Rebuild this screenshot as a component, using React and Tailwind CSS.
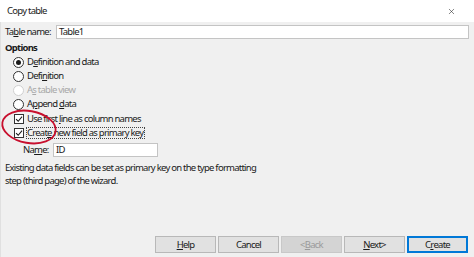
import React from 'react';
import { X } from 'lucide-react';

const Radio = ({ checked, disabled, children }) => (
    <div className={`flex items-center h-[14px] ${disabled ? 'text-[#a8a8a8]' : 'text-[#1a1a1a]'}`}>
        <span className={`w-[11px] h-[11px] rounded-full border bg-white flex items-center justify-center ml-[8px] mr-[3px] ${disabled ? 'border-[#d0d0d0]' : 'border-[#333]'}`}>
            {checked && <span className="w-[5px] h-[5px] rounded-full bg-[#1a1a1a]" />}
        </span>
        <span>{children}</span>
    </div>
);

const Check = ({ focused, children }) => (
    <div className="flex items-center h-[14px] text-[#1a1a1a]">
        <span className="w-[10px] h-[10px] border border-[#333] bg-white flex items-center justify-center ml-[9px] mr-[3px]">
            <svg width="8" height="8" viewBox="0 0 10 10">
                <path d="M1.3 5.2 L4 7.8 L8.8 2" fill="none" stroke="#1a1a1a" strokeWidth="1.3" />
            </svg>
        </span>
        <span className={focused ? 'border border-dotted border-[#444] leading-[10px] -ml-[1px] pr-[1px]' : ''}>{children}</span>
    </div>
);

const Btn = ({ children, disabled, primary }) => (
    <button
        className={`w-[61px] h-[17px] flex items-center justify-center ${primary ? 'border-[2px] border-[#0078d7] bg-[#e1e1e1] text-[#1a1a1a]' : disabled ? 'border border-[#c8c8c8] bg-[#d4d4d4] text-[#9a9a9a]' : 'border border-[#b8b8b8] bg-[#e1e1e1] text-[#1a1a1a]'}`}
    >
        {children}
    </button>
);

export default function App() {
    return (
        <div className="w-[474px] h-[257px] bg-white relative overflow-hidden text-[9.5px] tracking-[-0.75px] font-['Noto_Sans',sans-serif] text-[#1a1a1a]">
            <div className="h-[22px] flex items-center justify-between pl-[7px] pr-[18px] bg-white">
                <span>Copy table</span>
                <X size={9} strokeWidth={1.4} />
            </div>
            <div className="h-[235px] bg-[#f0f0f0] border-l border-[#e0e0e0] flex flex-col pl-[4px] pr-[5px] leading-[14px]">
                <div className="flex items-center h-[14px] mt-[3px]">
                    <span className="w-[51px] shrink-0">Ta<span className="underline">b</span>le name:</span>
                    <div className="flex-1 h-[14px] bg-white border border-[#c4c4c4] flex items-center pl-[2px]">Table1</div>
                </div>
                <div className="font-bold mt-[2px] h-[14px]">Options</div>
                <Radio checked>D<span className="underline">e</span>finition and data</Radio>
                <Radio>Defi<span className="underline">n</span>ition</Radio>
                <Radio disabled>A<span className="underline">s</span> table view</Radio>
                <Radio>A<span className="underline">p</span>pend <span className="underline">d</span>ata</Radio>
                <div className="mt-[1px]">
                    <Check>Use first <span className="underline">l</span>ine as column names</Check>
                    <Check focused>Creat<span className="underline">e</span> new field as primary key</Check>
                </div>
                <div className="flex items-center h-[14px] mt-[3px] ml-[18px]">
                    <span className="w-[30px]">Na<span className="underline">m</span>e:</span>
                    <div className="w-[105px] h-[14px] bg-white border border-[#c4c4c4] flex items-center pl-[2px]">ID</div>
                </div>
                <p className="mt-[4px] leading-[13px]">
                    Existing data fields can be set as primary key on the type formatting<br />
                    step (third page) of the wizard.
                </p>
                <div className="flex-1" />
                <div className="flex justify-end gap-[2px] mb-[4px] pr-[1px]">
                    <Btn><span className="underline">H</span>elp</Btn>
                    <Btn>Cancel</Btn>
                    <Btn disabled>&lt; <span className="underline">B</span>ack</Btn>
                    <Btn><span className="underline">N</span>ext&gt;</Btn>
                    <Btn primary>C<span className="underline">r</span>eate</Btn>
                </div>
            </div>
            {/* red marker circle drawn over the checkboxes */}
            <svg className="absolute left-0 top-[100px]" width="64" height="56" viewBox="0 0 64 56">
                <ellipse cx="29" cy="27" rx="27" ry="16" transform="rotate(10 29 27)" fill="none" stroke="#c8102e" strokeWidth="1.8" />
            </svg>
        </div>
    );
}
